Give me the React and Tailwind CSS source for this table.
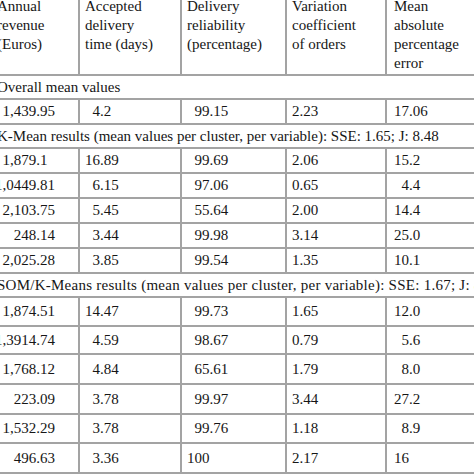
const kmean = [
  ["1,879.1", "16.89", "99.69", "2.06", "15.2", 25],
  ["1,0449.81", "6.15", "97.06", "0.65", "4.4", 25],
  ["2,103.75", "5.45", "55.64", "2.00", "14.4", 25],
  ["248.14", "3.44", "99.98", "3.14", "25.0", 25],
  ["2,025.28", "3.85", "99.54", "1.35", "10.1", 25],
];

const som = [
  ["1,874.51", "14.47", "99.73", "1.65", "12.0", 29],
  ["1,3914.74", "4.59", "98.67", "0.79", "5.6", 28],
  ["1,768.12", "4.84", "65.61", "1.79", "8.0", 30],
  ["223.09", "3.78", "99.97", "3.44", "27.2", 30],
  ["1,532.29", "3.78", "99.76", "1.18", "8.9", 29],
  ["496.63", "3.36", "100", "2.17", "16", 30],
];

// pad the integer part with invisible digits so decimals line up
function Num({ value, digits }) {
  const intLen = value.split(".")[0].length;
  const pad = "0".repeat(Math.max(0, digits - intLen));
  return (
    <span>
      {pad && <span className="invisible">{pad}</span>}
      {value}
    </span>
  );
}

function FirstCol({ value }) {
  const short = value.includes(".") && value.split(".")[1].length < 2;
  return (
    <div className="flex w-[86px] shrink-0 items-center justify-end pr-[23px]">
      {value}
      {short && <span className="invisible">0</span>}
    </div>
  );
}

function DataRow({ row }) {
  const [a, b, c, d, e, h] = row;
  return (
    <div className="flex border-b-2 border-[#a3a3a3]" style={{ height: h }}>
      <FirstCol value={a} />
      <div className="flex w-[102px] shrink-0 items-center border-l-2 border-[#a3a3a3] pl-[5px]">
        <Num value={b} digits={2} />
      </div>
      <div className="flex w-[105px] shrink-0 items-center border-l-2 border-[#a3a3a3] pl-[5px]">
        <Num value={c} digits={3} />
      </div>
      <div className="flex w-[100px] shrink-0 items-center border-l-2 border-[#a3a3a3] pl-[5px]">
        <Num value={d} digits={1} />
      </div>
      <div className="flex w-[140px] shrink-0 items-center border-l-2 border-[#a3a3a3] pl-[7px]">
        <Num value={e} digits={2} />
      </div>
    </div>
  );
}

function SectionRow({ children, className = "" }) {
  return (
    <div className={"flex h-[24px] items-center whitespace-nowrap border-b-2 border-[#a3a3a3] pl-[5px] " + className}>
      {children}
    </div>
  );
}

export default function App() {
  return (
    <div className="h-[474px] w-[474px] overflow-hidden bg-white">
      <div
        className="-ml-[8px] -mt-[4px] w-[540px] text-[15px] leading-[19px] text-[#161616]"
        style={{ fontFamily: '"Liberation Serif", "Times New Roman", serif' }}
      >
        <div className="flex h-[80px] border-b-2 border-[#a3a3a3]">
          <div className="w-[86px] shrink-0 pl-[5px] pt-[1px]">
            Annual<br />revenue<br />(Euros)
          </div>
          <div className="w-[102px] shrink-0 border-l-2 border-[#a3a3a3] pl-[5px] pt-[1px]">
            Accepted<br />delivery<br />time (days)
          </div>
          <div className="w-[105px] shrink-0 border-l-2 border-[#a3a3a3] pl-[5px] pt-[1px]">
            Delivery<br />reliability<br />(percentage)
          </div>
          <div className="w-[100px] shrink-0 border-l-2 border-[#a3a3a3] pl-[5px] pt-[1px]">
            Variation<br />coefficient<br />of orders
          </div>
          <div className="w-[140px] shrink-0 border-l-2 border-[#a3a3a3] pl-[7px] pt-[1px]">
            Mean<br />absolute<br />percentage<br />error
          </div>
        </div>

        <SectionRow>Overall mean values</SectionRow>
        <DataRow row={["1,439.95", "4.2", "99.15", "2.23", "17.06", 25]} />

        <SectionRow>
          K-Mean results (mean values per cluster, per variable): SSE: 1.65; J: 8.48
        </SectionRow>
        {kmean.map((r, i) => (
          <DataRow key={i} row={r} />
        ))}

        <SectionRow className="tracking-[0.25px]">
          SOM/K-Means results (mean values per cluster, per variable): SSE: 1.67; J: 8.52
        </SectionRow>
        {som.map((r, i) => (
          <DataRow key={i} row={r} />
        ))}
      </div>
    </div>
  );
}
